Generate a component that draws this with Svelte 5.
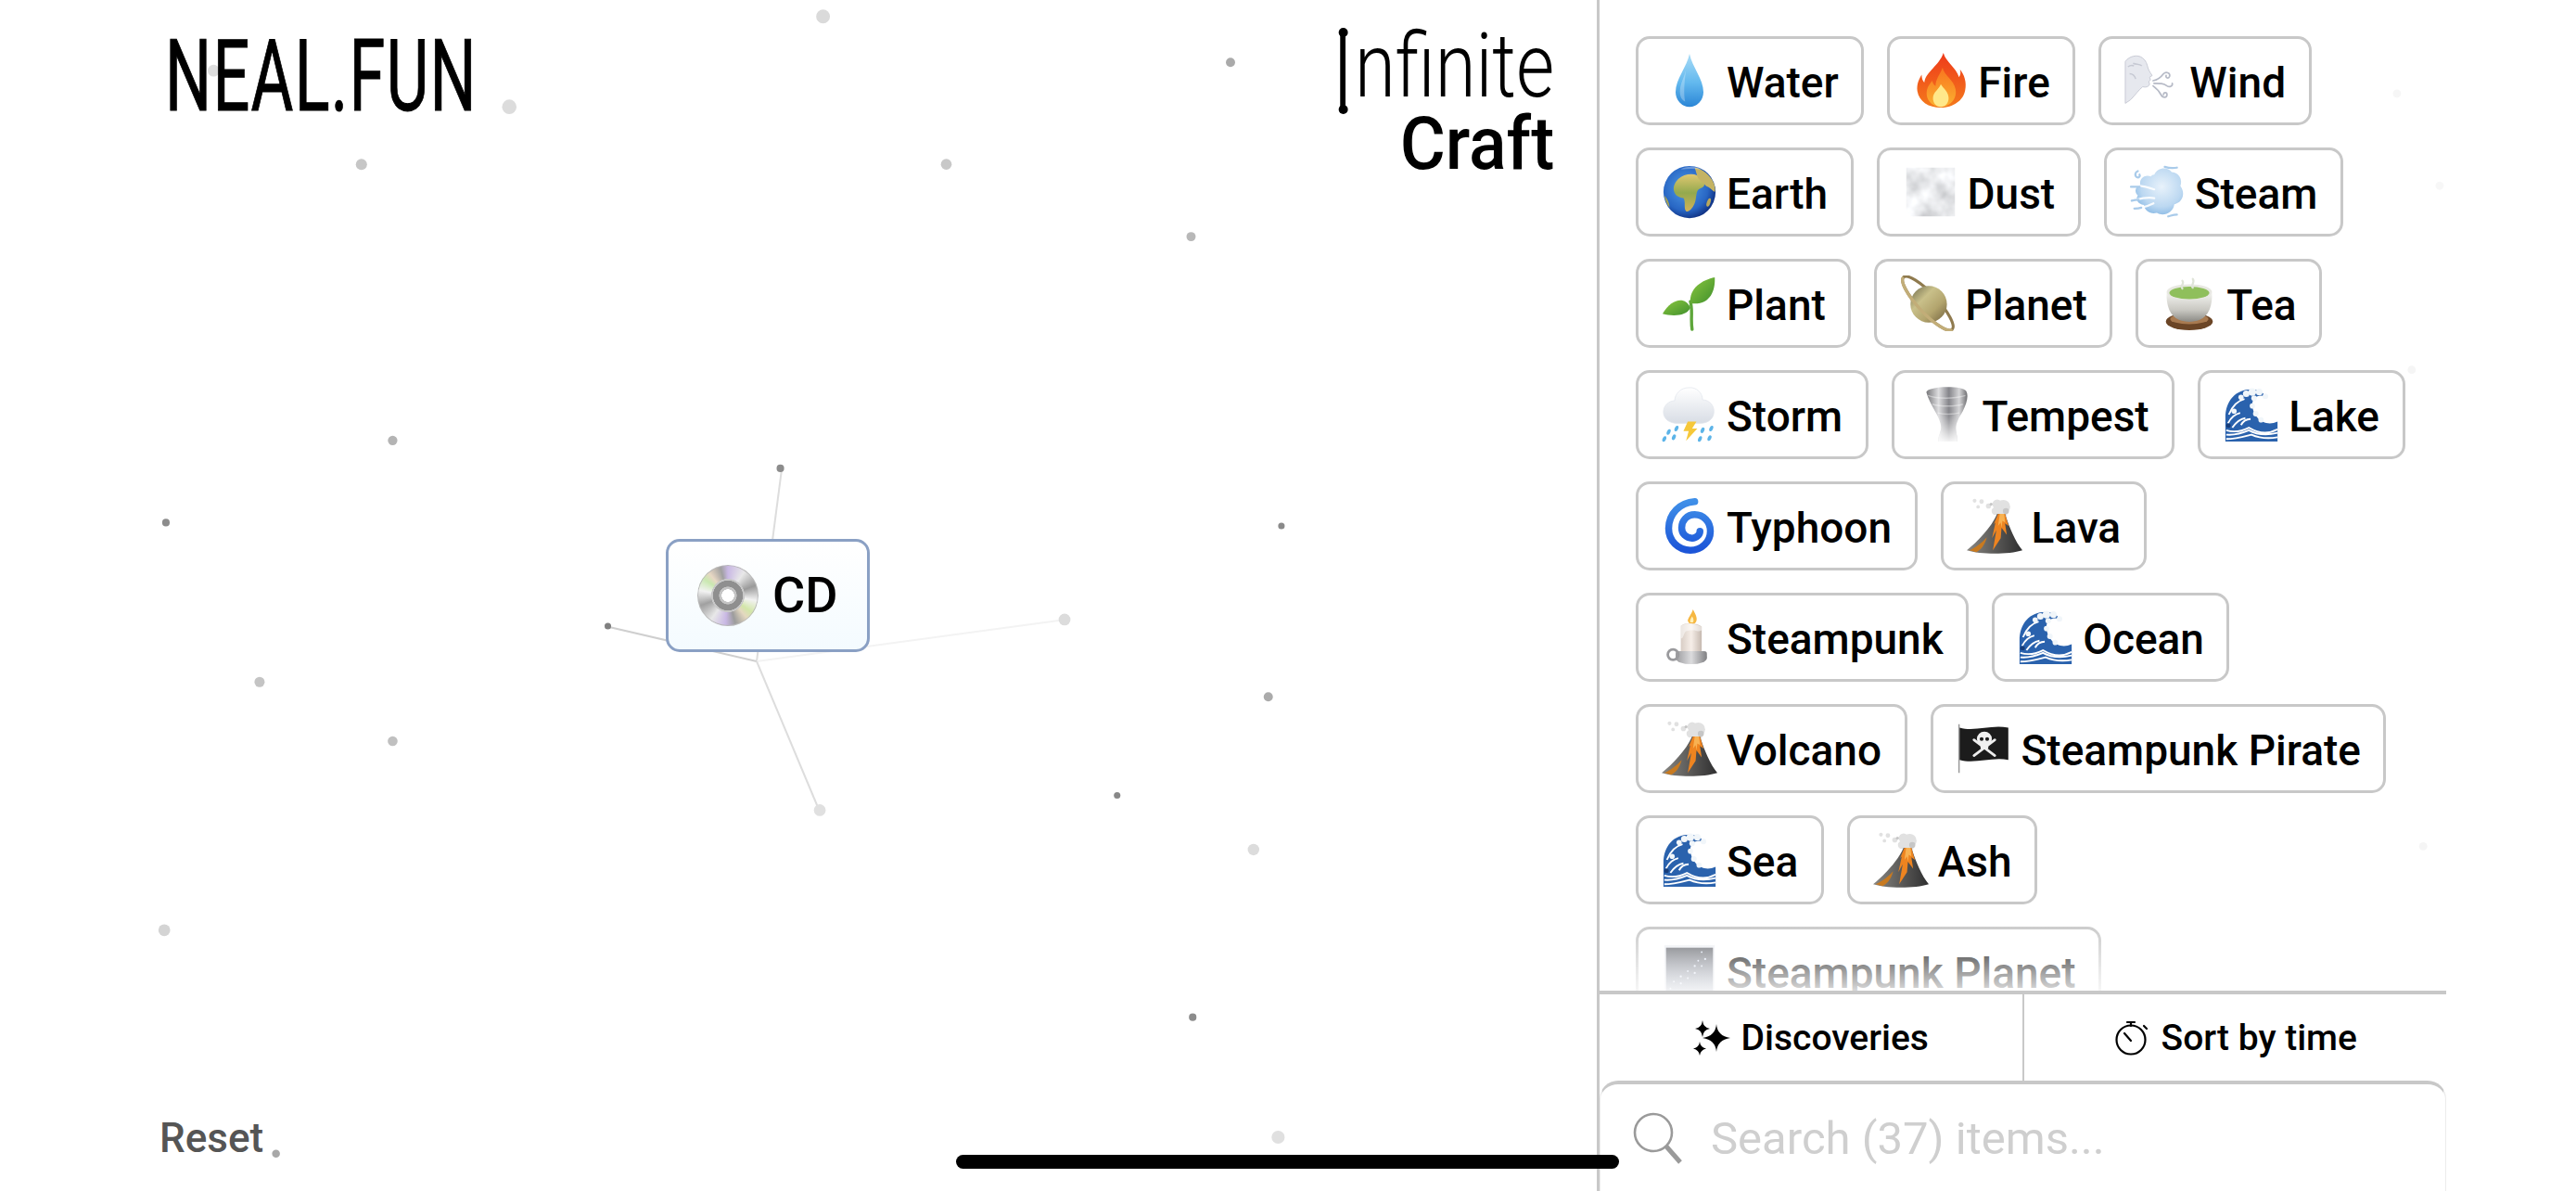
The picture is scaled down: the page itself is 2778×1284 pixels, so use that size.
<script>
  const S = 2778 / 1568;
  const items = [
    ['Water','water'],['Fire','fire'],['Wind','wind'],['Earth','earth'],['Dust','dust'],['Steam','steam'],
    ['Plant','plant'],['Planet','planet'],['Tea','tea'],['Storm','storm'],['Tempest','tornado'],['Lake','wave'],
    ['Typhoon','cyclone'],['Lava','volcano'],['Steampunk','candle'],['Ocean','wave'],['Volcano','volcano'],
    ['Steampunk Pirate','flag'],['Sea','wave'],['Ash','volcano'],['Steampunk Planet','milky']
  ];
  const dots = [
    [501,10,4.2,'#dadada'],[310,65,4.4,'#dcdcdc'],[220,100,3.4,'#c6c6c6'],[576,100,3.3,'#c8c8c8'],[749,38,2.8,'#aaaaaa'],
    [725,144,2.8,'#b8b8b8'],[239,268,2.9,'#b4b4b4'],[475,285,2.3,'#8c8c8c'],[101,318,2.3,'#8c8c8c'],[780,320,2,'#8a8a8a'],
    [370,381,2,'#808080'],[648,377,3.6,'#dcdcdc'],[158,415,3.1,'#c4c4c4'],[239,451,3,'#c0c0c0'],[772,424,2.8,'#ababab'],
    [499,493,3.6,'#e0e0e0'],[680,484,2,'#888888'],[763,517,3.5,'#dcdcdc'],[100,566,3.6,'#d4d4d4'],[726,619,2.3,'#8c8c8c'],
    [168,702,2.4,'#a8a8a8'],[778,692,4,'#e0e0e0'],[130,43,3.6,'#dddddd'],[1459,57,2.5,'#f6f6f6'],[1485,113,2.5,'#f7f7f7'],
    [1468,225,2.5,'#f5f5f5'],[1475,515,2.5,'#f5f5f5']
  ].map(([x,y,r,c]) => ({ x: x*S, y: y*S, r: r*S, c }));
  const links = [
    [843,506,'#dddddd'],[657,676,'#cfcfcf'],[1149,668,'#f3f3f3'],[884,875,'#dddddd']
  ];
</script>

<div class="page">
  <svg class="defs" aria-hidden="true">
    <defs>
      <linearGradient id="g-water" x1="0" y1="0" x2="0" y2="1"><stop offset="0" stop-color="#a9dcf7"/><stop offset=".55" stop-color="#62b8ee"/><stop offset="1" stop-color="#2b86d6"/></linearGradient>
      <linearGradient id="g-fire" x1="0" y1="0" x2="0" y2="1"><stop offset="0" stop-color="#ee3a1a"/><stop offset="1" stop-color="#f47a1c"/></linearGradient>
      <linearGradient id="g-fire2" x1="0" y1="0" x2="0" y2="1"><stop offset="0" stop-color="#f8751f"/><stop offset="1" stop-color="#fbb030"/></linearGradient>
      <radialGradient id="g-earth" cx=".42" cy=".42" r=".62"><stop offset="0" stop-color="#4f9be6"/><stop offset=".7" stop-color="#2866c4"/><stop offset="1" stop-color="#0f2f80"/></radialGradient>
      <linearGradient id="g-land" x1="0" y1="0" x2="0" y2="1"><stop offset="0" stop-color="#e0c770"/><stop offset=".5" stop-color="#93a94e"/><stop offset="1" stop-color="#d2b259"/></linearGradient>
      <radialGradient id="g-steam" cx=".55" cy=".4" r=".62"><stop offset="0" stop-color="#e8f2fb"/><stop offset=".7" stop-color="#bcd8f1"/><stop offset="1" stop-color="#8fbde6"/></radialGradient>
      <linearGradient id="g-leaf" x1="0" y1="0" x2="1" y2="1"><stop offset="0" stop-color="#8cc83f"/><stop offset="1" stop-color="#3f8f2c"/></linearGradient>
      <linearGradient id="g-planet" x1="0" y1="0" x2="1" y2="1"><stop offset="0" stop-color="#6a6648"/><stop offset=".35" stop-color="#c9c08a"/><stop offset=".65" stop-color="#b3a56e"/><stop offset="1" stop-color="#6f5f3c"/></linearGradient>
      <linearGradient id="g-cup" x1="0" y1="0" x2="0" y2="1"><stop offset="0" stop-color="#f5f5f1"/><stop offset=".6" stop-color="#c9c8c2"/><stop offset="1" stop-color="#8b8a85"/></linearGradient>
      <linearGradient id="g-cloud" x1="0" y1="0" x2="0" y2="1"><stop offset="0" stop-color="#ffffff"/><stop offset="1" stop-color="#d8dde5"/></linearGradient>
      <linearGradient id="g-tornado" x1="0" y1="0" x2="1" y2="0"><stop offset="0" stop-color="#77777a"/><stop offset=".3" stop-color="#dedee0"/><stop offset=".55" stop-color="#85858a"/><stop offset=".8" stop-color="#d6d6d8"/><stop offset="1" stop-color="#6f6f72"/></linearGradient>
      <linearGradient id="g-tornado-fade" x1="0" y1="0" x2="0" y2="1"><stop offset=".5" stop-color="#fff" stop-opacity="0"/><stop offset="1" stop-color="#fff" stop-opacity=".9"/></linearGradient>
      <linearGradient id="g-spiral" x1="0" y1="0" x2="0" y2="1"><stop offset="0" stop-color="#3f8fe8"/><stop offset="1" stop-color="#1c55d8"/></linearGradient>
      <linearGradient id="g-cone" x1="0" y1="0" x2="1" y2="0"><stop offset="0" stop-color="#8a8884"/><stop offset=".5" stop-color="#5b5a58"/><stop offset="1" stop-color="#2f2f30"/></linearGradient>
      <linearGradient id="g-candle" x1="0" y1="0" x2="1" y2="0"><stop offset="0" stop-color="#d8cdc5"/><stop offset=".5" stop-color="#f6eee8"/><stop offset="1" stop-color="#c6b9b0"/></linearGradient>
      <linearGradient id="g-silver" x1="0" y1="0" x2="1" y2="0"><stop offset="0" stop-color="#9b9b9e"/><stop offset=".5" stop-color="#dcdcde"/><stop offset="1" stop-color="#808083"/></linearGradient>
      <linearGradient id="g-milky" x1="0" y1="0" x2="0" y2="1"><stop offset="0" stop-color="#66686e"/><stop offset="1" stop-color="#a9b2c4"/></linearGradient>
      <filter id="f-dust" x="0" y="0" width="1" height="1">
        <feTurbulence type="fractalNoise" baseFrequency=".04" numOctaves="3" seed="7"/>
        <feColorMatrix values=".8 0 0 0 .4  .8 0 0 0 .41  .8 0 0 0 .43  0 0 0 0 1"/>
        <feComposite in2="SourceGraphic" operator="in"/>
      </filter>

      <symbol id="e-water" viewBox="0 0 64 64">
        <path d="M32 1C35 16 48 30 48 45a16 17 0 0 1-32 0C16 30 29 16 32 1Z" fill="url(#g-water)"/>
        <path d="M28 20C25 30 21 36 21 45c0 6 3 10 6 11-2-8-1-24 1-36Z" fill="#fff" opacity=".28"/>
      </symbol>
      <symbol id="e-fire" viewBox="0 0 64 64">
        <path d="M35 0c3 11 14 16 18 28 2-3 2-6 1-9 5 6 8 15 6 24-2 12-14 20-28 20S7 56 5 44C4 36 7 30 10 25c0 4 1 7 3 9C15 21 30 15 35 0Z" fill="url(#g-fire)"/>
        <path d="M34 17c2 9 13 14 15 25 2 11-7 20-17 20S14 54 16 43c1-5 4-8 6-11 1 3 2 5 4 6 0-8 5-13 8-21Z" fill="url(#g-fire2)"/>
        <path d="M32 36c3 5 9 9 9 16 0 6-4 10-9 10s-9-4-9-10c0-7 7-10 9-16Z" fill="#ffe889"/>
      </symbol>
      <symbol id="e-wind" viewBox="0 0 64 64">
        <path d="M1 10c4-6 14-9 20-4 4 3 5 7 6 11 1 3 2 5 5 9l-3 2 1 3-2 2 1 3c-1 3-4 4-8 3-4 3-9 10-14 15L1 58Z" fill="#e6e8ee" stroke="#c6c9d3" stroke-width="1"/>
        <path d="M10 12c4 2 7 0 10 3M6 24c4 0 6 3 7 6M4 16c3-2 5-2 7-1" fill="none" stroke="#c6c9d3" stroke-width="1.6"/>
        <path d="M33 32c6-1 9-4 12-8 3-3 8-1 7 3-1 3-5 2-4-1M34 35c7 0 11 0 15 3 3 2 7 0 6-3M33 38c4 3 7 6 9 10 2 4 7 4 7 0 0-3-4-3-4 0" fill="none" stroke="#b6bac6" stroke-width="1.8" stroke-linecap="round"/>
      </symbol>
      <symbol id="e-earth" viewBox="0 0 64 64">
        <circle cx="32" cy="32" r="30" fill="url(#g-earth)"/>
        <path d="M19 17c6-5 15-7 22-4 5 2 9 7 8 11-1 4-6 3-8 7-2 5-1 11-4 16-2 4-6 9-9 7-3-3 0-11-3-15-5-1-10-3-11-9-1-5 2-10 5-13Z" fill="url(#g-land)"/>
        <path d="M38 4c8 1 18 8 22 18 1 3 2 7 1 10-3-2-6-6-10-7-3-4-8-6-10-11-1-3-2-7-3-10Z" fill="#c4b363"/>
        <path d="M3 36c3 3 6 8 6 14-3-4-5-9-6-14Z" fill="#a8a452"/>
        <ellipse cx="54" cy="44" rx="2" ry="5" fill="#b9a85c" transform="rotate(20 54 44)"/>
        <path d="M22 6c6-4 18-4 24 0-8-1-16-1-24 0Z" fill="#fff" opacity=".3"/>
      </symbol>
      <symbol id="e-dust" viewBox="0 0 64 64">
        <rect x="4" y="4" width="56" height="56" fill="#d8d9dc" filter="url(#f-dust)"/>
      </symbol>
      <symbol id="e-steam" viewBox="0 0 64 64">
        <path d="M28 12c3-8 15-10 20-3 8 0 13 9 10 16 6 8 3 19-7 21-1 9-12 15-20 10-7 2-14-2-15-9-7-1-10-7-7-11-5-5-2-11 3-12-2-7 5-13 12-10 1-1 2-2 4-2Z" fill="url(#g-steam)"/>
        <g fill="none" stroke="#fff" stroke-width="2.4" stroke-linecap="round" opacity=".9"><path d="M6 25c8-1 14 1 22 4M7 41c7-2 13-3 21-2M13 50c5-1 10-3 14-5"/></g>
        <g fill="none" stroke="#a9cbea" stroke-width="2.4" stroke-linecap="round"><path d="M1 26c5 0 7 0 10 0M2 42c4-1 6-1 8-1M5 51c3 0 5 0 8-1M40 3c3 1 8 2 14 1M44 60c4-1 6-2 10-2"/><path d="M9 8c-3 1-4 5-1 7 2 1 4-1 3-3"/></g>
      </symbol>
      <symbol id="e-plant" viewBox="0 0 64 64">
        <path d="M35 62C33 50 36 40 33 30" fill="none" stroke="#5ea63a" stroke-width="3.6" stroke-linecap="round"/>
        <path d="M33 37C27 24 12 26 1 44c11 3 28 3 32-7Z" fill="url(#g-leaf)"/>
        <path d="M33 32C31 14 47 5 61 2c1 16-6 33-28 30Z" fill="url(#g-leaf)"/>
      </symbol>
      <symbol id="e-planet" viewBox="0 0 64 64">
        <g transform="rotate(47 32 32)"><ellipse cx="32" cy="32" rx="41" ry="11" fill="none" stroke="#8f7a4e" stroke-width="3.4"/></g>
        <circle cx="33" cy="33" r="21" fill="url(#g-planet)"/>
        <g transform="rotate(47 32 32)"><path d="M-9 32A41 11 0 0 0 73 32" fill="none" stroke="#c2ad78" stroke-width="3.6"/></g>
      </symbol>
      <symbol id="e-tea" viewBox="0 0 64 64">
        <ellipse cx="32" cy="53" rx="27" ry="10" fill="#6b4526"/>
        <ellipse cx="32" cy="50" rx="22" ry="6" fill="#a87a50"/>
        <path d="M6 19h52c1 16-4 28-14 32-8 3-16 3-24 0C10 47 5 35 6 19Z" fill="url(#g-cup)"/>
        <ellipse cx="32" cy="19" rx="26" ry="9" fill="#e8e8e2"/>
        <ellipse cx="32" cy="20" rx="23" ry="7.2" fill="#8fbf5c"/>
        <path d="M24 15c-3-4 3-5 0-9M36 14c-3-3 3-6 0-10" fill="none" stroke="#dfe4d8" stroke-width="2.4" stroke-linecap="round"/>
      </symbol>
      <symbol id="e-storm" viewBox="0 0 64 64">
        <g fill="url(#g-cloud)" stroke="#e2e6ec" stroke-width=".8"><path d="M31 1c9-1 16 6 16 14 8 0 14 7 13 15-1 8-8 12-16 12H18C9 42 2 37 2 29s7-13 13-13c0-8 7-15 16-15Z"/></g>
        <path d="M30 40h10l-5 8h6L28 62l3-11h-6Z" fill="#f6c83a"/>
        <g fill="#5cb4e8"><ellipse cx="8" cy="52" rx="2" ry="3.4" transform="rotate(25 8 52)"/><ellipse cx="3" cy="60" rx="2" ry="3.4" transform="rotate(25 3 60)"/><ellipse cx="17" cy="48" rx="2" ry="3.4" transform="rotate(25 17 48)"/><ellipse cx="14" cy="58" rx="2" ry="3.4" transform="rotate(25 14 58)"/><ellipse cx="47" cy="50" rx="2" ry="3.4" transform="rotate(25 47 50)"/><ellipse cx="44" cy="60" rx="2" ry="3.4" transform="rotate(25 44 60)"/><ellipse cx="57" cy="48" rx="2" ry="3.4" transform="rotate(25 57 48)"/><ellipse cx="55" cy="59" rx="2" ry="3.4" transform="rotate(25 55 59)"/></g>
      </symbol>
      <symbol id="e-tornado" viewBox="0 0 64 64">
        <path d="M10 6C12-1 52-2 56 5c3 6 0 15-4 23-4 7-8 13-8 20 0 6 3 11 1 15H24c-1-5 2-9 3-15C28 36 14 22 10 6Z" fill="url(#g-tornado)"/>
        <path d="M10 6C12-1 52-2 56 5c3 6 0 15-4 23-4 7-8 13-8 20 0 6 3 11 1 15H24c-1-5 2-9 3-15C28 36 14 22 10 6Z" fill="url(#g-tornado-fade)"/>
        <path d="M12 10c10 4 30 4 43 0M17 20c9 3 26 3 35 0M23 30c6 2 18 2 25 0" fill="none" stroke="#fff" stroke-opacity=".4" stroke-width="1.6"/>
      </symbol>
      <symbol id="e-wave" viewBox="0 0 64 64">
        <path d="M2 63V36C2 16 14 3 32 3c7 0 13 3 16 8-8-3-15 1-15 9 0 15 14 27 29 20v23Z" fill="#2a62ad"/>
        <g fill="none" stroke="#fff" stroke-width="2"><path d="M6 32c4-10 10-16 18-18M5 42c4-8 8-10 14-12M10 47c4-6 9-10 15-11M20 44c2-4 6-7 11-7M3 50c10 3 18 1 26-3 10 6 22 8 33 2M3 55c11 1 19-2 26-5 9 5 20 6 33 3M3 60c11 0 21-3 29-5 9 4 19 5 30 3"/></g>
        <g fill="#f1f6fa"><circle cx="33" cy="6" r="4.5"/><circle cx="41" cy="6" r="3.8"/><circle cx="48" cy="11" r="3.2"/><circle cx="26" cy="8" r="3.8"/><circle cx="20" cy="12" r="3"/><circle cx="35" cy="13" r="3.2"/><circle cx="33" cy="22" r="3"/><circle cx="37" cy="31" r="3.2"/><circle cx="43" cy="38" r="3"/><circle cx="12" cy="28" r="3"/></g>
        <rect x="3" y="42" width="5" height="5" fill="#173c78" rx="2"/>
      </symbol>
      <symbol id="e-cyclone" viewBox="0 0 64 64">
        <path d="M38 4C21 5 8 18 8 35c0 14 11 25 25 25 13 0 23-10 23-22 0-11-8-19-18-19-9 0-15 7-15 15 0 7 5 12 12 12 5 0 9-4 9-8" fill="none" stroke="url(#g-spiral)" stroke-width="8" stroke-linecap="round"/>
      </symbol>
      <symbol id="e-volcano" viewBox="0 0 64 64">
        <g fill="#e1e1e1"><circle cx="42" cy="10" r="8"/><circle cx="35" cy="7" r="5.500"/><circle cx="33" cy="15" r="4.500"/><circle cx="41" cy="18" r="5.500"/><circle cx="25" cy="9" r="3"/><circle cx="17" cy="4" r="2.600"/><circle cx="9" cy="3" r="2.200"/><circle cx="13" cy="10" r="2"/></g>
        <g fill="#c6c6c6"><circle cx="45" cy="15" r="3.500"/><circle cx="28" cy="7" r="1.800"/></g>
        <path d="M35 18h9C49 34 56 50 64 60c-16 5-48 5-64 0C12 50 28 34 35 18Z" fill="url(#g-cone)"/>
        <path d="M36 18h8l4 14-4-3 2 13-6-8-1 12-9 14 4-23-5 9 4-18-2 2Z" fill="#ee8420"/>
        <path d="M38 18h5l1 10-3-2-1 8-1-6-3 4Z" fill="#f8b252"/>
        <path d="M3 60c8-4 14-8 20-15-2 8-6 14-12 17Z" fill="#c87a20"/>
      </symbol>
      <symbol id="e-candle" viewBox="0 0 64 64">
        <path d="M36 0c3 6 5 9 4 13-1 3-3 4-5 4s-4-1-5-4c0-3 4-7 6-13Z" fill="#f6b742"/>
        <path d="M35 8c2 3 2 5 1 7h-3c-1-2 0-4 2-7Z" fill="#fff0b8"/>
        <path d="M22 19c3-3 7-3 10-3 5 0 11 1 14 4v32H22Z" fill="url(#g-candle)"/>
        <path d="M22 19v14c3 2 3-6 6-8 3-1 7-1 10-1 3 1 5 2 8 0v-4c-5-3-19-5-24-1Z" fill="#fff" opacity=".5"/>
        <ellipse cx="34" cy="56" rx="18" ry="7" fill="url(#g-silver)"/>
        <rect x="16" y="48" width="36" height="9" rx="3" fill="url(#g-silver)"/>
        <circle cx="13" cy="52" r="6" fill="none" stroke="#9a9a9d" stroke-width="3"/>
      </symbol>
      <symbol id="e-flag" viewBox="0 0 64 64">
        <rect x="2" y="4" width="1.6" height="56" fill="#9a9a9a"/>
        <path d="M3.5 8c18 5 36-4 56 0v37c-18-4-38 5-56 0Z" fill="#1c1c1c"/>
        <g stroke="#eee" stroke-width="3" stroke-linecap="round"><path d="M20 22l24 18M44 22L20 40"/></g>
        <circle cx="32" cy="21" r="8.6" fill="#f0f0f0"/><rect x="27.5" y="26" width="9" height="6.5" rx="1.6" fill="#f0f0f0"/>
        <circle cx="28.8" cy="21" r="2.2" fill="#1c1c1c"/><circle cx="35.2" cy="21" r="2.2" fill="#1c1c1c"/>
      </symbol>
      <symbol id="e-milky" viewBox="0 0 64 64">
        <rect x="3" y="2" width="58" height="60" fill="#eef0f4"/>
        <rect x="5" y="5" width="54" height="56" fill="url(#g-milky)"/>
        <g fill="#dfe6f5"><circle cx="46" cy="10" r="1"/><circle cx="50" cy="18" r="1.2"/><circle cx="42" cy="20" r="1"/><circle cx="38" cy="26" r="1.2"/><circle cx="46" cy="26" r="1"/><circle cx="30" cy="32" r="1"/><circle cx="38" cy="34" r="1.2"/><circle cx="22" cy="38" r="1.2"/><circle cx="30" cy="40" r="1"/><circle cx="14" cy="44" r="1"/><circle cx="22" cy="46" r="1.2"/><circle cx="10" cy="52" r="1"/></g>
      </symbol>
    </defs>
  </svg>

  <svg class="field" width="2778" height="1284" aria-hidden="true">
    {#each links as [x, y, c]}
      <line x1="816" y1="713" x2={x} y2={y} stroke={c} stroke-width="2"/>
    {/each}
    {#each dots as d}
      <circle cx={d.x} cy={d.y} r={d.r} fill={d.c}/>
    {/each}
  </svg>

  <main class="canvas">
    <header class="top">
      <div class="neal">NEAL.FUN</div>
      <div class="brand">
        <div class="infinite"><span class="cap">I</span>nfinite</div>
        <div class="craft">Craft</div>
      </div>
    </header>
    <div class="card">
      <span class="cd"></span>
      <span class="card-label">CD</span>
    </div>
    <div class="reset">Reset</div>
  </main>

  <aside class="side">
    <div class="list">
      {#each items as [name, icon]}
        <div class="item">
          <svg class="emoji" viewBox="0 0 64 64" aria-hidden="true"><use href={'#e-' + icon}/></svg>
          <span class="label">{name}</span>
        </div>
      {/each}
    </div>
    <div class="tabs">
      <div class="tab">
        <svg class="tab-icon" viewBox="0 0 40 38" aria-hidden="true">
          <path d="M25 4Q26 17 40 19Q26 21 25 34Q24 21 10 19Q24 17 25 4Z"/>
          <path d="M10 0Q10.800 8 18 9Q10.800 10 10 18Q9.200 10 2 9Q9.200 8 10 0Z"/>
          <path d="M7 23Q7.600 29 14 30.500Q7.600 32 7 38Q6.400 32 0 30.500Q6.400 29 7 23Z"/>
        </svg>
        <span>Discoveries</span>
      </div>
      <div class="tab">
        <svg class="tab-icon" viewBox="0 0 40 38" aria-hidden="true" fill="none" stroke="#000" stroke-width="2.200">
          <circle cx="19" cy="21" r="15.500"/>
          <path d="M15 2h8M19 2v4M33 6l3 3M12 14l7 8" stroke-linecap="round"/>
        </svg>
        <span>Sort by time</span>
      </div>
    </div>
    <div class="search">
      <svg class="search-icon" viewBox="0 0 56 56" aria-hidden="true" fill="none" stroke="#9a9a9a">
        <circle cx="22" cy="22" r="20" stroke-width="2.600"/>
        <path d="M36 37l15 17" stroke-width="5"/>
      </svg>
      <span class="search-text">Search (37) items...</span>
    </div>
  </aside>

  <div class="home"></div>
</div>

<style>
  :global(body) { margin: 0; background: #fff; }
  .page {
    position: relative;
    display: flex;
    width: 2778px;
    height: 1284px;
    overflow: hidden;
    background: #fff;
    font-family: Roboto, "Liberation Sans", sans-serif;
    color: #000;
  }
  .defs { position: absolute; width: 0; height: 0; }
  .field { position: absolute; left: 0; top: 0; }

  .canvas {
    position: relative;
    flex: 0 0 1722px;
    display: flex;
    flex-direction: column;
  }
  .top {
    display: flex;
    justify-content: space-between;
    align-items: flex-start;
    padding: 0 46px 0 178px;
  }
  .neal {
    margin-top: 28px;
    font-size: 108px;
    line-height: 108px;
    font-weight: 400;
    letter-spacing: 2px;
    -webkit-text-stroke: 1px #000;
    transform: scaleX(.65);
    transform-origin: left center;
  }
  .brand { text-align: right; }
  .infinite {
    margin-top: 18px;
    height: 95px;
    font-size: 96px;
    line-height: 106px;
    font-weight: 300;
    white-space: nowrap;
    transform: scaleX(.83);
    transform-origin: right center;
  }
  .cap {
    position: relative;
    display: inline-block;
    font-size: 116px;
    line-height: 106px;
    font-weight: 300;
    vertical-align: -14px;
  }
  .cap::before, .cap::after {
    content: '';
    position: absolute;
    left: 10px;
    width: 12px;
    height: 10px;
    border-radius: 50%;
    background: #000;
  }
  .cap::before { top: 5px; }
  .cap::after { top: 88px; }
  .craft {
    font-size: 80px;
    line-height: 84px;
    font-weight: 500;
    transform: scaleX(.94);
    transform-origin: right center;
  }

  .card {
    position: absolute;
    left: 718px;
    top: 581px;
    box-sizing: border-box;
    width: 220px;
    height: 122px;
    display: flex;
    align-items: center;
    gap: 15px;
    padding-left: 31px;
    border: 3px solid #8aa0c4;
    border-radius: 15px;
    background: linear-gradient(to bottom, #fff, #f4fbff);
  }
  .cd {
    flex: none;
    width: 66px;
    height: 66px;
    border-radius: 50%;
    background:
      radial-gradient(circle, #fff 0 14%, #c4c4c4 15% 20%, #8f8f8f 21% 34%, #c8c8c8 35% 38%, transparent 39%),
      conic-gradient(#c9b8e4 0deg, #e8e8e8 35deg, #9a9a9a 70deg, #f2f2f2 100deg, #d2e6a8 125deg, #e4d8c0 140deg, #9c9c9c 165deg, #c9b8e4 185deg, #e8e8e8 215deg, #a0a0a0 250deg, #f2f2f2 280deg, #c9e8b0 305deg, #e8d8c4 320deg, #a0a0a0 345deg, #c9b8e4 360deg);
    box-shadow: inset 0 0 0 1px #b8b8b8;
  }
  .card-label { font-size: 54px; font-weight: 500; line-height: 1; }

  .reset {
    margin-top: auto;
    margin-bottom: 31px;
    margin-left: 172px;
    font-size: 44px;
    line-height: 52px;
    font-weight: 500;
    color: #555;
  }

  .side {
    position: relative;
    flex: 0 0 916px;
    box-sizing: border-box;
    height: 1284px;
    display: flex;
    flex-direction: column;
    border-left: 3px solid #c8c8c8;
  }
  .list {
    position: relative;
    flex: 1;
    min-height: 0;
    overflow: hidden;
    display: flex;
    flex-wrap: wrap;
    align-content: flex-start;
    gap: 24px 25px;
    padding: 39px 20px 0 39px;
  }
  .list::after {
    content: '';
    position: absolute;
    left: 0;
    right: 0;
    bottom: 0;
    height: 76px;
    background: linear-gradient(to bottom, rgba(255,255,255,0), rgba(255,255,255,.85));
    pointer-events: none;
  }
  .item {
    box-sizing: border-box;
    height: 96px;
    display: flex;
    align-items: center;
    padding: 0 24.500px 0 25px;
    border: 3px solid #c8c8c8;
    border-radius: 15px;
    background: #fff;
    font-size: 46px;
    font-weight: 500;
    line-height: 1;
    white-space: nowrap;
  }
  .label { padding-top: 3px; }
  .emoji { flex: none; width: 60px; height: 60px; margin-right: 10px; }

  .tabs {
    flex: none;
    box-sizing: border-box;
    height: 97px;
    display: flex;
    border-top: 4px solid #c8c8c8;
    background: #fff;
  }
  .tab {
    flex: 1;
    display: flex;
    align-items: center;
    justify-content: center;
    gap: 12px;
    font-size: 39px;
    font-weight: 500;
  }
  .tab + .tab { border-left: 2px solid #c8c8c8; }
  .tab-icon { width: 40px; height: 38px; }
  .search {
    flex: none;
    box-sizing: border-box;
    height: 119px;
    display: flex;
    align-items: center;
    gap: 28px;
    padding: 0 0 0 35px;
    border-top: 4px solid #c8c8c8;
    border-left: 1px solid #ececec;
    border-right: 1px solid #ececec;
    border-radius: 20px 20px 0 0;
    background: #fff;
    font-size: 49px;
    color: #cfcfcf;
  }
  .search-text { padding-top: 2px; }
  .search-icon { width: 56px; height: 56px; }

  .home {
    position: absolute;
    left: 1031px;
    top: 1245px;
    width: 715px;
    height: 15px;
    border-radius: 8px;
    background: #000;
  }
</style>
